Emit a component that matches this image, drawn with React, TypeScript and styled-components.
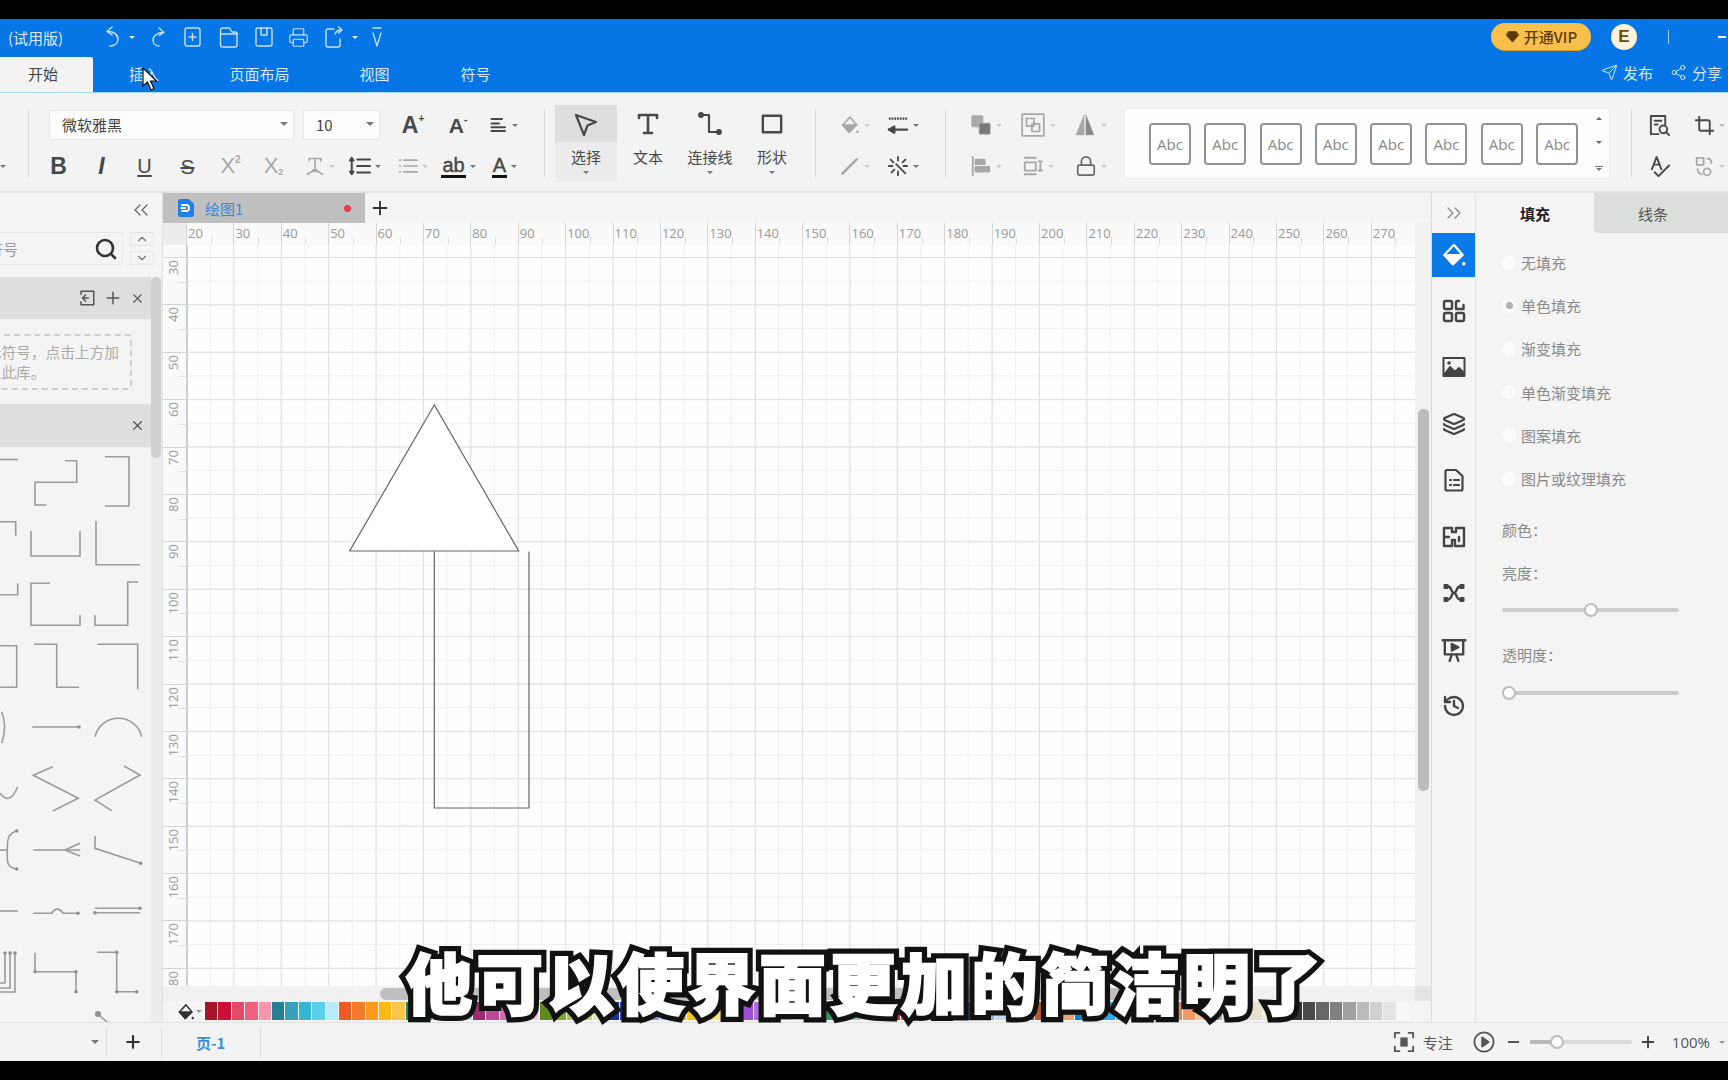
import React from 'react';
import styled, { createGlobalStyle } from 'styled-components';
import {
  Printer, Search, X, Plus, ChevronUp, ChevronDown, Lock, Crop, History, Layers,
  ChevronsLeft, ChevronsRight, Send, Share2,
} from 'lucide-react';

const UI = `"Noto Sans CJK SC", "Noto Sans", sans-serif`;
const LATIN = `"Liberation Sans", "Noto Sans CJK SC", sans-serif`;

const Global = createGlobalStyle`
  html, body { margin: 0; padding: 0; background: #000; }
  body { font-family: ${UI}; font-size: 15px; color: #444; }
  * { box-sizing: border-box; }
`;

const Page = styled.div`
  position: relative;
  width: 1728px;
  height: 1080px;
  overflow: hidden;
  display: flex;
  flex-direction: column;
  background: #000;
`;
const BlackBar = styled.div`flex: 0 0 19px; background: #000;`;

/* title bar */
const TitleBar = styled.div`
  flex: 0 0 38px;
  background: #0676e6;
  display: flex;
  align-items: center;
  color: #e6f0fb;
  padding: 0 0 2px 8px;
`;
const AppName = styled.span`width: 96px; font-size: 15px; color: #dbe9fa;`;
const QuickCell = styled.div<{ $w: number }>`
  width: ${p => p.$w}px;
  display: flex;
  align-items: center;
  gap: 9px;
  color: #c9e0f8;
`;
const TitleRight = styled.div`
  margin-left: auto;
  display: flex;
  align-items: center;
  padding-right: 2px;
`;
const VipPill = styled.div`
  width: 100px;
  height: 28px;
  border-radius: 14px;
  background: #fbc04b;
  border-bottom: 1px solid #d39a2a;
  color: #5a3a08;
  font-size: 15px;
  font-weight: 500;
  display: flex;
  align-items: center;
  justify-content: center;
  gap: 4px;
`;
const Avatar = styled.div`
  width: 26px;
  height: 26px;
  margin-left: 20px;
  border-radius: 50%;
  background: #fdf3d8;
  color: #6a4a10;
  font: 700 17px ${LATIN};
  display: flex;
  align-items: center;
  justify-content: center;
`;
const TitleDivider = styled.div`width: 1px; height: 14px; margin: 0 49px 0 31px; background: #a9cdf3;`;
const MinBtn = styled.div`width: 8px; height: 2px; background: #e9f2fc;`;

/* tab bar */
const TabBar = styled.div`
  flex: 0 0 35px;
  background: #0676e6;
  display: flex;
  align-items: stretch;
`;
const Tab = styled.div<{ $w: number; $active?: boolean }>`
  width: ${p => p.$w}px;
  display: flex;
  align-items: center;
  justify-content: center;
  padding: 0 ${p => (p.$active ? 7 : 0)}px 2px 0;
  font-size: 15px;
  color: ${p => (p.$active ? '#444' : '#d7e8fb')};
  background: ${p => (p.$active ? '#f3f3f3' : 'transparent')};
  border-top-right-radius: ${p => (p.$active ? 2 : 0)}px;
`;
const TabRight = styled.div`
  margin-left: auto;
  display: flex;
  align-items: center;
  gap: 5px;
  padding: 0 6px 4px 0;
  color: #d7e8fb;
  font-size: 15px;
`;
const TabAction = styled.span<{ $ml?: number }>`
  display: inline-flex;
  align-items: center;
  gap: 5px;
  margin-left: ${p => p.$ml ?? 0}px;
`;

/* toolbar */
const Toolbar = styled.div`
  flex: 0 0 101px;
  display: flex;
  background: #f3f3f3;
  border-top: 1px solid #a6dcfa;
  border-bottom: 2px solid #e3e3e3;
`;
const Sep = styled.div`
  flex: 0 0 1px;
  height: 68px;
  margin-top: 16px;
  background: #d9d9d9;
`;
const Section = styled.div<{ $w: number; $pl?: number }>`
  flex: 0 0 ${p => p.$w}px;
  padding: 17px 0 0 ${p => p.$pl ?? 0}px;
  display: flex;
  flex-direction: column;
  gap: 11px;
`;
const ToolRow = styled.div`display: flex; align-items: center; height: 30px;`;
const Cell = styled.div<{ $w: number; $center?: boolean; $dim?: boolean }>`
  flex: 0 0 ${p => p.$w}px;
  display: flex;
  align-items: center;
  justify-content: ${p => (p.$center ? 'center' : 'flex-start')};
  gap: 4px;
  color: ${p => (p.$dim ? '#a8a8a8' : '#484848')};
`;
const Select = styled.div<{ $w: number; $ml?: number }>`
  flex: 0 0 ${p => p.$w}px;
  height: 30px;
  margin-left: ${p => p.$ml ?? 0}px;
  padding: 0 5px 2px 12px;
  background: #fdfdfd;
  border: 1px solid #e6e6e6;
  border-radius: 2px;
  display: flex;
  align-items: center;
  justify-content: space-between;
  font-size: 15px;
  color: #444;
`;
const Caret = styled.i<{ $c?: string; $s?: number }>`
  display: inline-block;
  width: 0;
  height: 0;
  border-left: ${p => p.$s ?? 4}px solid transparent;
  border-right: ${p => p.$s ?? 4}px solid transparent;
  border-top: ${p => p.$s ?? 4}px solid ${p => p.$c ?? '#777'};
`;
const Letter = styled.span<{ $w?: number; $i?: boolean; $u?: boolean; $s?: boolean; $size?: number }>`
  position: relative;
  font: ${p => (p.$w ?? 700)} ${p => p.$size ?? 20}px/1 ${LATIN};
  font-style: ${p => (p.$i ? 'italic' : 'normal')};
  text-decoration: ${p => (p.$u ? 'underline' : p.$s ? 'line-through' : 'none')};
  text-underline-offset: 2px;
  text-decoration-thickness: 2px;
`;
const Mini = styled.sup`font: 700 10px/1 ${LATIN}; vertical-align: top;`;
const Low = styled.sub`font: 700 9px/1 ${LATIN}; vertical-align: bottom;`;
const BarLetter = styled.span`
  font: 400 20px/20px ${LATIN};
  -webkit-text-stroke: 0.4px currentColor;
  border-bottom: 3px solid #111;
  padding: 0 1px;
`;

const ToolBtn = styled.div<{ $active?: boolean; $ml?: number }>`
  flex: 0 0 62px;
  margin: 12px 0 0 ${p => p.$ml ?? 0}px;
  height: 77px;
  display: flex;
  flex-direction: column;
  align-items: center;
  background: ${p => (p.$active ? '#ececec' : 'transparent')};
  color: #484848;
`;
const ToolIcon = styled.div<{ $active?: boolean }>`
  align-self: stretch;
  flex: 0 0 37px;
  display: flex;
  align-items: center;
  justify-content: center;
  background: ${p => (p.$active ? '#dedede' : 'transparent')};
`;
const ToolLabel = styled.div`
  margin-top: 5px;
  font-size: 15px;
  line-height: 20px;
  white-space: nowrap;
  color: #484848;
  height: 24px;
`;
const BtnGroup = styled.div`flex: 0 0 270px; display: flex;`;

const Gallery = styled.div`
  flex: 0 0 486px;
  height: 71px;
  margin-top: 15px;
  padding-left: 24px;
  background: #fdfdfd;
  border: 1px solid #ebebeb;
  display: flex;
  align-items: center;
  gap: 13.3px;
`;
const StyleBox = styled.div`
  flex: 0 0 42px;
  height: 42px;
  border: 2px solid #939393;
  border-radius: 4px;
  background: #fff;
  color: #888;
  font: 400 15px "Open Sans", sans-serif;
  display: flex;
  align-items: center;
  justify-content: center;
`;
const GalleryArrows = styled.div`
  flex: 0 0 16px;
  height: 54px;
  display: flex;
  flex-direction: column;
  justify-content: space-between;
  align-items: center;
  color: #777;
`;
const UpCaret = styled(Caret)`transform: rotate(180deg);`;
const MoreCaret = styled.div`
  display: flex;
  flex-direction: column;
  align-items: center;
  gap: 1px;
  &::before { content: ''; width: 8px; height: 1px; background: #777; }
`;

/* main area */
const Main = styled.div`flex: 1 1 0; min-height: 0; display: flex; background: #f4f4f4;`;

const LeftPanel = styled.aside`
  flex: 0 0 163px;
  display: flex;
  flex-direction: column;
  overflow: hidden;
  border-right: 1px solid #e0e0e0;
  background: #f4f4f4;
`;
const PanelTop = styled.div`
  flex: 0 0 39px;
  display: flex;
  align-items: center;
  justify-content: flex-end;
  padding: 0 9px 6px 0;
  color: #666;
`;
const SearchRow = styled.div`flex: 0 0 33px; display: flex; margin-bottom: 12px;`;
const SearchBox = styled.div`
  flex: 0 0 183px;
  margin-left: -60px;
  padding: 0 4px 0 17px;
  border: 1px solid #e4e4e4;
  border-radius: 2px;
  color: #999;
  font-size: 15px;
  display: flex;
  align-items: center;
  justify-content: space-between;
  white-space: nowrap;
`;
const StepCol = styled.div`
  margin-left: 7px;
  flex: 0 0 24px;
  display: flex;
  flex-direction: column;
  justify-content: space-between;
`;
const StepBtn = styled.div`
  height: 14px;
  border: 1px solid #e4e4e4;
  color: #777;
  display: flex;
  align-items: center;
  justify-content: center;
`;
const LibWrap = styled.div`flex: 1 1 0; min-height: 0; display: flex;`;
const LibMain = styled.div`flex: 0 0 151px; overflow: hidden; display: flex; flex-direction: column;`;
const LibHead = styled.div<{ $h: number }>`
  flex: 0 0 ${p => p.$h}px;
  background: #dedede;
  display: flex;
  align-items: center;
  justify-content: flex-end;
  padding-right: 6px;
  color: #555;
  gap: 7px;
`;
const DashBox = styled.div`
  flex: 0 0 56px;
  margin: 15px 19px 14px -40px;
  padding: 6px 0 0 10px;
  border: 2px dashed #cfcfcf;
  border-radius: 4px;
  color: #aaa;
  font-size: 14.7px;
  line-height: 20px;
  white-space: nowrap;
`;
const LibArt = styled.svg`flex: 0 0 575px; width: 151px; display: block;`;
const PanelScroll = styled.div`flex: 0 0 12px; background: #ececec; padding-left: 0;`;
const PanelThumb = styled.div`width: 10px; height: 181px; border-radius: 5px; background: #cfcfcf;`;

const Center = styled.div`flex: 0 0 1268px; min-width: 0; display: flex; flex-direction: column;`;
const DocTabs = styled.div`flex: 0 0 30px; display: flex; align-items: stretch; background: #f4f4f4;`;
const DocTab = styled.div`
  flex: 0 0 202px;
  background: #c0c0c0;
  display: flex;
  align-items: center;
  padding: 0 14px 0 15px;
  gap: 11px;
  color: #3f86d6;
  font-size: 15px;
`;
const UnsavedDot = styled.i`
  margin-left: auto;
  width: 7px;
  height: 7px;
  border-radius: 50%;
  background: #ee3b48;
`;
const NewDoc = styled.div`
  margin-left: 4px;
  display: flex;
  align-items: center;
  color: #333;
`;
const Workspace = styled.div`
  flex: 1 1 0;
  min-height: 0;
  display: grid;
  grid-template-columns: 23px 1fr 16px;
  grid-template-rows: 22px 1fr;
`;
const RulerCorner = styled.div`background: #ededed;`;
const HRuler = styled.div`display: flex; overflow: hidden; background: #fafafa;`;
const HCell = styled.div`
  position: relative;
  flex: 0 0 47.4px;
  border-left: 1px solid #d4d4d4;
  padding-left: 1px;
  font: 400 13px/20px "Open Sans", sans-serif;
  color: #999;
  &::after {
    content: '';
    position: absolute;
    left: 23.7px;
    bottom: 0;
    width: 1px;
    height: 8px;
    background: #dfdfdf;
  }
`;
const ScrollCol = styled.div`grid-row: 1 / span 2; grid-column: 3; background: #f1f1f1; padding: 186px 0 0 3px;`;
const ScrollThumbV = styled.div`width: 11px; height: 382px; border-radius: 5px; background: #bcbcbc;`;
const VRuler = styled.div`
  display: flex;
  flex-direction: column;
  overflow: hidden;
  background: #fafafa;
  padding-top: 12px;
`;
const VCell = styled.div`
  position: relative;
  flex: 0 0 47.4px;
  border-top: 1px solid #d4d4d4;
  padding: 2px 0 0 1px;
  font: 400 13px/18px "Open Sans", sans-serif;
  color: #999;
  &::after {
    content: '';
    position: absolute;
    top: 23.7px;
    right: 0;
    width: 8px;
    height: 1px;
    background: #dfdfdf;
  }
`;
const VLabel = styled.span`display: block; writing-mode: vertical-rl; transform: rotate(180deg);`;
const Canvas = styled.div`
  position: relative;
  overflow: hidden;
  background-color: #fefefd;
  border-left: 2px solid #cfcfcf;
  background-image:
    linear-gradient(to right, #e0e0de 1px, transparent 1px),
    linear-gradient(to bottom, #e0e0de 1px, transparent 1px),
    linear-gradient(to right, #f0f0ee 1px, transparent 1px),
    linear-gradient(to bottom, #f0f0ee 1px, transparent 1px);
  background-size: 47.4px 47.4px, 47.4px 47.4px, 23.7px 23.7px, 23.7px 23.7px;
  background-position: -2px 0, 0 12px, -2px 0, 0 12px;
`;
const ShapeLayer = styled.svg`position: absolute; left: 0; top: 0; width: 100%; height: 100%;`;
const HScrollRow = styled.div`flex: 0 0 15px; display: flex; background: #f1f1f1;`;
const ScrollThumbH = styled.div`
  margin: 2px 0 0 217px;
  width: 805px;
  height: 12px;
  border-radius: 6px;
  background: #bfbfbf;
`;
const ScrollCorner = styled.div`margin-left: auto; width: 16px; background: #e4e4e4;`;
const PaletteRow = styled.div`flex: 0 0 21px; display: flex; align-items: stretch; padding-left: 14px; background: #f4f4f4;`;
const PaletteTool = styled.div`flex: 0 0 28px; display: flex; align-items: center; gap: 1px; color: #333;`;
const Swatches = styled.div`display: flex; gap: 1px; height: 18px; margin-top: 1px;`;
const Swatch = styled.i<{ $c: string }>`flex: 0 0 12.4px; width: 12.4px; background: ${p => p.$c};`;

const IconBar = styled.div`
  flex: 0 0 45px;
  display: flex;
  flex-direction: column;
  border-left: 1px solid #dcdcdc;
  border-right: 1px solid #e2e2e2;
  background: #f4f4f4;
`;
const BarTop = styled.div`flex: 0 0 40px; display: flex; align-items: center; justify-content: center; color: #888;`;
const BarActive = styled.div`
  flex: 0 0 44px;
  margin-bottom: 5.7px;
  background: #0a7ae9;
  color: #fff;
  display: flex;
  align-items: center;
  justify-content: center;
`;
const BarItem = styled.div`
  flex: 0 0 56.5px;
  display: flex;
  align-items: center;
  justify-content: center;
  color: #444;
`;

const RightPane = styled.div`flex: 0 0 252px; display: flex; flex-direction: column; background: #f4f4f4;`;
const PaneTabs = styled.div`flex: 0 0 40px; display: flex;`;
const PaneTab = styled.div<{ $active?: boolean }>`
  width: ${p => (p.$active ? 118 : 134)}px;
  display: flex;
  align-items: center;
  justify-content: center;
  padding-right: ${p => (p.$active ? 0 : 16)}px;
  font-size: 15px;
  font-weight: ${p => (p.$active ? 700 : 400)};
  color: ${p => (p.$active ? '#222' : '#555')};
  background: ${p => (p.$active ? 'transparent' : '#dcdedc')};
  border-bottom-left-radius: ${p => (p.$active ? 0 : 4)}px;
`;
const PaneBody = styled.div`padding: 8px 0 0 26px; display: flex; flex-direction: column;`;
const RadioRow = styled.div`height: 43.2px; display: flex; align-items: center; gap: 5px; color: #8a8a8a; font-size: 15px;`;
const Radio = styled.i<{ $on?: boolean }>`
  width: 14px;
  height: 14px;
  border-radius: 50%;
  background: #fbfbfb;
  display: flex;
  align-items: center;
  justify-content: center;
  &::after {
    content: '';
    width: 7px;
    height: 7px;
    border-radius: 50%;
    background: ${p => (p.$on ? '#b0b0b0' : 'transparent')};
  }
`;
const FieldLabel = styled.div<{ $mt: number }>`
  margin-top: ${p => p.$mt}px;
  line-height: 20px;
  color: #888;
  font-size: 15px;
`;
const SliderTrack = styled.div<{ $mt: number; $w: number }>`
  position: relative;
  margin-top: ${p => p.$mt}px;
  width: ${p => p.$w}px;
  height: 4px;
  border-radius: 2px;
  background: #cdcdcd;
`;
const SliderThumb = styled.i<{ $at: number }>`
  position: absolute;
  left: ${p => p.$at}px;
  top: -5px;
  width: 14px;
  height: 14px;
  border-radius: 50%;
  background: #fff;
  border: 2px solid #bcbcbc;
`;

/* status bar */
const StatusBar = styled.div`
  flex: 0 0 39px;
  display: flex;
  align-items: center;
  background: #f3f3f3;
  border-top: 1px solid #e0e0e0;
  color: #555;
`;
const StatusSep = styled.div<{ $ml: number }>`
  width: 1px;
  height: 30px;
  margin-left: ${p => p.$ml}px;
  background: #dcdcdc;
`;
const StatusCaret = styled.div`margin-left: 91px; display: flex;`;
const AddPage = styled.div`margin-left: 16px; display: flex; color: #333;`;
const PageName = styled.div`margin-left: 34px; color: #3a8fdc; font-size: 15px; font-weight: 700;`;
const StatusRight = styled.div`margin-left: auto; display: flex; align-items: center; padding-right: 3px;`;
const FocusBtn = styled.div`display: flex; align-items: center; gap: 8px; font-size: 15px; color: #555;`;
const PlayBtn = styled.div`margin-left: 20px; display: flex; color: #555;`;
const ZoomDash = styled.i`margin-left: 13px; width: 11px; height: 2px; background: #555;`;
const ZoomTrack = styled.div`
  position: relative;
  margin-left: 11px;
  width: 102px;
  height: 4px;
  border-radius: 2px;
  background: #dadada;
  &::before {
    content: '';
    position: absolute;
    left: 0;
    top: 0;
    width: 27px;
    height: 4px;
    background: #b8b8b8;
  }
`;
const ZoomPlus = styled.div`margin-left: 7px; display: flex; color: #444;`;
const ZoomValue = styled.div`margin-left: 15px; font: 400 15px "Open Sans", sans-serif; color: #555; display: flex; align-items: center; gap: 9px;`;

const Caption = styled.div`
  position: absolute;
  left: 406px;
  top: 930px;
  width: 930px;
  font: 900 66px/100px "Noto Sans CJK SC", sans-serif;
  letter-spacing: 4.7px;
  white-space: nowrap;
  color: #fff;
  -webkit-text-stroke: 13px #111;
  paint-order: stroke fill;
  &::after {
    content: attr(data-text);
    position: absolute;
    left: 0;
    top: 0;
    color: #fff;
    -webkit-text-stroke: 2.5px #fff;
  }
`;
const Cursor = styled.svg`position: absolute; left: 142px; top: 67px;`;

const Svg: React.FC<{ w?: number; h?: number; vb?: string; sw?: number; fill?: string; children: React.ReactNode }> = ({
  w = 22, h, vb = '0 0 24 24', sw = 2, fill = 'none', children,
}) => (
  <svg width={w} height={h ?? w} viewBox={vb} fill={fill} stroke="currentColor" strokeWidth={sw} strokeLinecap="round" strokeLinejoin="round">
    {children}
  </svg>
);

const FillBucket: React.FC<{ w?: number }> = ({ w = 22 }) => (
  <Svg w={w}>
    <path d="M12 2.5 L3 12 L11 20.5 L20 12 Z" />
    <path d="M3.5 12 H19.5 L11 20.5 Z" fill="currentColor" />
    <circle cx="21" cy="20" r="1.6" fill="currentColor" stroke="none" />
  </Svg>
);

const PALETTE = [
  '#a61429', '#cc0f35', '#e24a66', '#f0607f', '#f598ac',
  '#247f93', '#3a9fb8', '#35b6d3', '#5ad0e8', '#b8ebf5',
  '#ee5a24', '#f57a2c', '#f99a1c', '#fdb913', '#fcc450',
  '#1e8a6e', '#2ea384', '#42b89a', '#6fd0b5', '#a8e6d4',
  '#9c2a6e', '#bd4a95', '#d06db0', '#e59dcc', '#f4cde6',
  '#5f8a1d', '#7ba636', '#a6c24f', '#c3d66f', '#dfe9a8',
  '#1a2fa0', '#2a44c0', '#5066d8', '#8a9ae8', '#c0c9f2',
  '#e8a818', '#f5c518', '#f7dc3c', '#f9e877', '#fcf3b5',
  '#9c4fd6', '#b070e0', '#c490e8', '#d8b5f0', '#ecdaf8',
  '#2f8f4f', '#3a9a5a', '#5fb87a', '#8ed0a2', '#c4e8cf',
  '#a82a18', '#c73b26', '#f05032', '#f47c63', '#f9b3a3',
  '#1f4fb8', '#2456c4', '#4f7ad8', '#8fb0e8', '#c5d7f5',
  '#7a3418', '#a04a28', '#b85c30', '#d07840', '#e8a070',
  '#0f7fd0', '#1a92e0', '#2ea6f0', '#74c4f5', '#b5e0fa',
  '#8f5034', '#b87050', '#d9895e', '#f09a66', '#f7c5a2',
  '#b5ad95', '#cdc5ae', '#dcd5c0', '#e8e0cc', '#f2edd8',
  '#222222', '#333333', '#4a4a4a', '#666666', '#808080',
  '#a0a0a0', '#bbbbbb', '#d0d0d0', '#e4e4e4', '#f8f8f8',
];

const COL_LABELS = Array.from({ length: 27 }, (_, i) => 20 + i * 10);
const ROW_LABELS = Array.from({ length: 16 }, (_, i) => 30 + i * 10);

const y = (v: number) => v - 447;
const pts = (list: number[][]) => list.map(([a, b]) => `${a},${y(b)}`).join(' ');

const LINES: number[][][] = [
  [[0, 459.5], [18, 459.5]],
  [[65, 460.7], [76.7, 460.7], [76.7, 482.3], [35, 482.3], [35, 505], [46.7, 505]],
  [[105, 456.7], [129, 456.7], [129, 506], [105, 506]],
  [[0, 521.7], [15.7, 521.7], [15.7, 535.7]],
  [[31, 531], [31, 556], [80, 556], [80, 531]],
  [[96, 521], [96, 564.7], [140, 564.7]],
  [[0, 594.7], [17.7, 594.7], [17.7, 583.3]],
  [[50, 583.3], [31, 583.3], [31, 625.3], [80, 625.3], [80, 615]],
  [[138, 582], [127.7, 582], [127.7, 625.3], [95, 625.3], [95, 615]],
  [[0, 645.7], [16.7, 645.7], [16.7, 687.3], [0, 687.3]],
  [[34, 644.3], [56.7, 644.3], [56.7, 687.3], [79, 687.3]],
  [[97.3, 644.3], [137.7, 644.3], [137.7, 689.3]],
  [[32.3, 727], [79, 727]],
  [[52.7, 766.7], [33.3, 775.3], [78.3, 798.3], [52.7, 811]],
  [[124, 766], [140, 775], [95, 800], [111.7, 810.7]],
  [[0, 850], [7.3, 850]],
  [[33.3, 850], [80, 850]],
  [[65, 850], [80, 843.3]],
  [[65, 850], [80, 856]],
  [[95, 836], [95, 848.3], [140.7, 863.3]],
  [[0, 911], [17.7, 911]],
  [[95, 908.3], [140, 908.3]],
  [[95, 912.7], [140, 912.7]],
  [[5, 953], [5, 983], [0, 983]],
  [[10, 953], [10, 988], [0, 988]],
  [[15, 953], [15, 992], [0, 992]],
  [[35, 952.7], [35, 971.7], [76, 971.7], [76, 991.7]],
  [[97.3, 952.3], [116.7, 952.3], [116.7, 991.7], [136.7, 991.7]],
  [[98, 1014], [107, 1022]],
];
const DOTS: number[][] = [
  [79, 727], [16.7, 831], [16.7, 869], [78, 913.3], [140, 908.3], [95, 912.7],
  [35, 971.7], [76, 971.7], [76, 991.7], [116.7, 952.3], [116.7, 991.7], [136.7, 991.7],
  [5, 953], [10, 953], [15, 953], [98, 1014], [140.7, 863.3],
];

const CAPTION = '他可以使界面更加的简洁明了';

const App: React.FC = () => (
  <Page>
    <Global />
    <BlackBar />
    <TitleBar>
      <AppName>(试用版)</AppName>
      <QuickCell $w={47}>
        <Svg w={16} h={24} vb="0 0 16 24" sw={1.5}><path d="M8 2 L3 6.5 L8 10 M3 6.5 C10 6 14 10 14 14 C14 18 11 21 6 21" /></Svg>
        <Caret $c="#e6f0fb" $s={3} />
      </QuickCell>
      <QuickCell $w={33}>
        <Svg w={16} h={24} vb="0 0 16 24" sw={1.4}><path d="M8 3 L13 7.5 L8 10.5 M13 7.5 C6 7.5 2 11 2 15 C2 18 4 21 8 21" /></Svg>
      </QuickCell>
      <QuickCell $w={35}>
        <Svg w={17} h={22} vb="0 0 17 22" sw={1.4}><rect x="1" y="2" width="15" height="18" rx="2" /><path d="M8.5 7.5V14.5 M5 11H12" /></Svg>
      </QuickCell>
      <QuickCell $w={36}>
        <Svg w={20} h={22} vb="0 0 20 22" sw={1.4}><path d="M1.5 8V4a2 2 0 0 1 2-2h7l2.5 4h3a2 2 0 0 1 2 2v11a2 2 0 0 1-2 2h-12.500a2 2 0 0 1-2-2Z M1.500 8h17" /></Svg>
      </QuickCell>
      <QuickCell $w={33}>
        <Svg w={18} h={22} vb="0 0 18 22" sw={1.4}><rect x="1" y="2" width="16" height="18" rx="2" /><path d="M6 2V9H12V2" /></Svg>
      </QuickCell>
      <QuickCell $w={37}><Printer size={21} strokeWidth={1.4} /></QuickCell>
      <QuickCell $w={47}>
        <Svg w={18} h={24} vb="0 0 18 24" sw={1.4}><path d="M9 4H3a2 2 0 0 0-2 2v14a2 2 0 0 0 2 2h10a2 2 0 0 0 2-2v-6 M10 9 C11 6 13 5 17 5 M13.500 2 L17 5 L13.500 8" /></Svg>
        <Caret $c="#e6f0fb" $s={3} />
      </QuickCell>
      <QuickCell $w={20}>
        <Svg w={10} h={24} vb="0 0 10 24" sw={1.3}><path d="M1 3H9 M1 8L5 21L9 8" /></Svg>
      </QuickCell>
      <TitleRight>
        <VipPill>
          <Svg w={15} vb="0 0 24 24" fill="#5a3a08" sw={1}><path d="M6 4H18L22 10L12 21L2 10Z" /></Svg>
          开通VIP
        </VipPill>
        <Avatar>E</Avatar>
        <TitleDivider />
        <MinBtn />
      </TitleRight>
    </TitleBar>

    <TabBar>
      <Tab $w={93} $active>开始</Tab>
      <Tab $w={102}>插入</Tab>
      <Tab $w={129}>页面布局</Tab>
      <Tab $w={101}>视图</Tab>
      <Tab $w={101}>符号</Tab>
      <TabRight>
        <TabAction><Send size={17} strokeWidth={1.4} />发布</TabAction>
        <TabAction $ml={12}><Share2 size={17} strokeWidth={1.4} />分享</TabAction>
      </TabRight>
    </TabBar>

    <Toolbar>
      <Section $w={28}>
        <ToolRow />
        <ToolRow><Caret $s={3} /></ToolRow>
      </Section>
      <Sep />
      <Section $w={515} $pl={8}>
        <ToolRow>
          <Select $w={245} $ml={12}>微软雅黑<Caret /></Select>
          <Select $w={77} $ml={9}>10<Caret /></Select>
          <Cell $w={66} $center><Letter $w={700} $size={23}>A<Mini>+</Mini></Letter></Cell>
          <Cell $w={24} $center><Letter $w={700} $size={21}>A<Mini>-</Mini></Letter></Cell>
          <Cell $w={67} $center>
            <Svg w={18} sw={2.6}><path d="M2 4H16 M2 10H12 M2 15H20 M2 20H20" /></Svg>
            <Caret $s={3} />
          </Cell>
        </ToolRow>
        <ToolRow>
          <Cell $w={43} $center><Letter $size={23}>B</Letter></Cell>
          <Cell $w={43} $center><Letter $size={23} $i>I</Letter></Cell>
          <Cell $w={43} $center><Letter $size={20} $w={400} $u>U</Letter></Cell>
          <Cell $w={43} $center><Letter $size={21} $w={400} $s>S</Letter></Cell>
          <Cell $w={43} $center $dim><Letter $size={22} $w={400}>X<Mini>2</Mini></Letter></Cell>
          <Cell $w={43} $center $dim><Letter $size={22} $w={400}>X<Low>2</Low></Letter></Cell>
          <Cell $w={50} $center $dim>
            <Svg w={20} sw={2}><path d="M5 6V3H19V6 M12 3V17 M9 17H15 M3 22C8 17 16 17 21 22" /></Svg>
            <Caret $s={3} $c="#ccc" />
          </Cell>
          <Cell $w={40} $center>
            <Svg w={22} sw={2.2}><path d="M9 5H23 M9 12H23 M9 19H23 M3 3V21 M1 6L3 3L5 6 M1 18L3 21L5 18" /></Svg>
            <Caret $s={3} />
          </Cell>
          <Cell $w={56} $center $dim>
            <Svg w={20} sw={2}><path d="M7 5H23 M7 12H23 M7 19H23 M2 5H3 M2 12H3 M2 19H3" /></Svg>
            <Caret $s={3} $c="#ccc" />
          </Cell>
          <Cell $w={35} $center>
            <BarLetter>ab</BarLetter>
            <Caret $s={3} />
          </Cell>
          <Cell $w={57} $center>
            <BarLetter>A</BarLetter>
            <Caret $s={3} />
          </Cell>
        </ToolRow>
      </Section>
      <Sep />
      <BtnGroup>
        <ToolBtn $active $ml={10}>
          <ToolIcon $active><Svg w={24} sw={2.2}><path d="M2 3 L22 10 L13.500 13.500 L10 23 Z" /></Svg></ToolIcon>
          <ToolLabel>选择</ToolLabel>
          <Caret $s={3} />
        </ToolBtn>
        <ToolBtn>
          <ToolIcon><Svg w={24} sw={2.6}><path d="M3 6V3H21V6 M12 3V21 M8 21H16" /></Svg></ToolIcon>
          <ToolLabel>文本</ToolLabel>
        </ToolBtn>
        <ToolBtn>
          <ToolIcon>
            <Svg w={24} sw={2.2}>
              <path d="M4 3H11V20H21" />
              <circle cx="3" cy="3" r="1.800" fill="currentColor" />
              <circle cx="21" cy="20" r="1.800" fill="currentColor" />
            </Svg>
          </ToolIcon>
          <ToolLabel>连接线</ToolLabel>
          <Caret $s={3} />
        </ToolBtn>
        <ToolBtn>
          <ToolIcon><Svg w={22} sw={2.6}><rect x="2" y="3" width="20" height="18" /></Svg></ToolIcon>
          <ToolLabel>形状</ToolLabel>
          <Caret $s={3} />
        </ToolBtn>
      </BtnGroup>
      <Sep />
      <Section $w={129} $pl={24}>
        <ToolRow>
          <Cell $w={47} $dim><FillBucket w={20} /><Caret $s={3} $c="#ccc" /></Cell>
          <Cell $w={50}>
            <Svg w={22} sw={2.4}>
              <path d="M2 5H22" strokeDasharray="2 1" strokeLinecap="butt" />
              <path d="M2 17H22" />
              <path d="M2 17L8 13.500V20.500Z" fill="currentColor" />
            </Svg>
            <Caret $s={3} />
          </Cell>
        </ToolRow>
        <ToolRow>
          <Cell $w={47} $dim>
            <Svg w={20} sw={3}><path d="M3 21 L20 4" /></Svg>
            <Caret $s={3} $c="#ccc" />
          </Cell>
          <Cell $w={50}>
            <Svg w={22} sw={2}><path d="M12 2V6 M4 5L7 8 M20 5L17 8 M2 12H6 M18 12H22 M5 19L8 16 M12 18V22 M10 10L20 20" /></Svg>
            <Caret $s={3} />
          </Cell>
        </ToolRow>
      </Section>
      <Sep />
      <Section $w={178} $pl={24}>
        <ToolRow>
          <Cell $w={50} $dim>
            <Svg w={22} sw={1} fill="currentColor"><rect x="2" y="2" width="12" height="12" rx="1" /><rect x="10" y="10" width="12" height="12" rx="1" fill="#777" /></Svg>
            <Caret $s={3} $c="#ccc" />
          </Cell>
          <Cell $w={53} $dim>
            <Svg w={26} sw={1.6}>
              <rect x="2" y="2" width="20" height="20" />
              <rect x="6" y="6" width="7" height="7" />
              <rect x="11" y="11" width="7" height="7" />
            </Svg>
            <Caret $s={3} $c="#ccc" />
          </Cell>
          <Cell $w={40} $dim>
            <Svg w={24} sw={0.5} fill="currentColor"><path d="M11 2 L3 22H11Z" /><path d="M13 2 L21 22H13Z" fill="#888" /></Svg>
            <Caret $s={3} $c="#ccc" />
          </Cell>
        </ToolRow>
        <ToolRow>
          <Cell $w={52} $dim>
            <Svg w={22} sw={2}>
              <path d="M3 2V22" />
              <rect x="6" y="5" width="10" height="5" fill="currentColor" />
              <rect x="6" y="13" width="15" height="5" fill="currentColor" />
            </Svg>
            <Caret $s={3} $c="#ccc" />
          </Cell>
          <Cell $w={53} $dim>
            <Svg w={22} sw={2}>
              <path d="M3 3H15 M3 21H15 M20 7V17 M18 7H22 M18 17H22" />
              <rect x="3" y="8" width="12" height="9" />
            </Svg>
            <Caret $s={3} $c="#ccc" />
          </Cell>
          <Cell $w={40}>
            <Lock size={22} strokeWidth={1.8} color="#666" />
            <Caret $s={3} $c="#ccc" />
          </Cell>
        </ToolRow>
      </Section>
      <Gallery>
        {Array.from({ length: 8 }, (_, i) => <StyleBox key={i}>Abc</StyleBox>)}
        <GalleryArrows>
          <UpCaret $s={3} $c="#666" />
          <Caret $s={3} $c="#666" />
          <MoreCaret><Caret $s={3} $c="#777" /></MoreCaret>
        </GalleryArrows>
      </Gallery>
      <Section $w={21} />
      <Sep />
      <Section $w={96} $pl={16}>
        <ToolRow>
          <Cell $w={46}>
            <Svg w={23} sw={2}>
              <path d="M18 11V2H3V21H11 M7 7H14 M7 11H10" />
              <circle cx="16" cy="16" r="4" />
              <path d="M19 19L22 22" />
            </Svg>
          </Cell>
          <Cell $w={34}><Crop size={21} strokeWidth={2.2} /><Caret $s={3} $c="#bbb" /></Cell>
        </ToolRow>
        <ToolRow>
          <Cell $w={46}>
            <Svg w={23} sw={2}><path d="M4 15L9 2L14 15 M6 10H12 M7 18L11 22L22 11" /></Svg>
          </Cell>
          <Cell $w={34} $dim>
            <Svg w={21} sw={2}><rect x="3" y="2" width="8" height="8" /><circle cx="15" cy="18" r="4" /><path d="M15 3C18 3 20 5 20 8 M4 15C4 18 6 20 9 21" /></Svg>
            <Caret $s={3} $c="#ccc" />
          </Cell>
        </ToolRow>
      </Section>
    </Toolbar>

    <Main>
      <LeftPanel>
        <PanelTop><ChevronsLeft size={24} strokeWidth={1.3} /></PanelTop>
        <SearchRow>
          <SearchBox>搜索符号<Search size={24} strokeWidth={2.6} color="#333" /></SearchBox>
          <StepCol>
            <StepBtn><ChevronUp size={14} /></StepBtn>
            <StepBtn><ChevronDown size={14} /></StepBtn>
          </StepCol>
        </SearchRow>
        <LibWrap>
          <LibMain>
            <LibHead $h={42}>
              <Svg w={18} sw={2}><path d="M4 7V3H21V21H4V17 M14 12H6 M10 8L6 12L10 16" /></Svg>
              <Plus size={20} strokeWidth={1.8} />
              <X size={15} strokeWidth={1.8} />
            </LibHead>
            <DashBox>暂无符号，点击上方加<br />载入此库。</DashBox>
            <LibHead $h={43}><X size={15} strokeWidth={2} /></LibHead>
            <LibArt viewBox="0 0 151 575" height={575}>
              <g fill="none" stroke="#9b9b9b" strokeWidth={1.6}>
                {LINES.map((l, i) => <polyline key={i} points={pts(l)} />)}
                <path d={`M1.7 ${y(711.7)} Q7.500 ${y(727)} 1.700 ${y(743.300)}`} />
                <path d={`M95 ${y(736.7)} A 24 24 0 0 1 141.700 ${y(736.7)}`} />
                <path d={`M0 ${y(793.3)} Q10 ${y(806)} 17.700 ${y(786.7)}`} />
                <path d={`M16.700 ${y(831)} Q7.300 ${y(833)} 7.300 ${y(845)} V${y(860)} Q8 ${y(868)} 16.700 ${y(869)}`} />
                <path d={`M33.300 ${y(913.3)} H51.700 Q57 ${y(905)} 63.300 ${y(913.3)} H78.300`} />
              </g>
              <g fill="#8f8f8f">
                {DOTS.map(([a, b], i) => <circle key={i} cx={a} cy={y(b)} r={i === 15 ? 3 : 1.8} />)}
              </g>
            </LibArt>
          </LibMain>
          <PanelScroll><PanelThumb /></PanelScroll>
        </LibWrap>
      </LeftPanel>

      <Center>
        <DocTabs>
          <DocTab>
            <Svg w={16} h={18} vb="0 0 16 18" sw={0} fill="#1f7fe8">
              <path d="M2 0H11L16 5V16a2 2 0 0 1-2 2H2a2 2 0 0 1-2-2V2a2 2 0 0 1 2-2Z" />
              <path d="M4 6H8a3 3 0 0 1 0 6H4 M3 9H7" fill="none" stroke="#fff" strokeWidth={1.8} />
            </Svg>
            绘图1
            <UnsavedDot />
          </DocTab>
          <NewDoc><Plus size={22} strokeWidth={2} /></NewDoc>
        </DocTabs>
        <Workspace>
          <RulerCorner />
          <HRuler>{COL_LABELS.map(n => <HCell key={n}>{n}</HCell>)}</HRuler>
          <ScrollCol><ScrollThumbV /></ScrollCol>
          <VRuler>{ROW_LABELS.map(n => <VCell key={n}><VLabel>{n}</VLabel></VCell>)}</VRuler>
          <Canvas>
            <ShapeLayer>
              <path d="M246.300 160 L161.700 306 L330.700 306 Z" fill="#fff" stroke="#666" strokeWidth={1.2} />
              <path d="M246.300 306.500 V563 H341 V306.500" fill="none" stroke="#666" strokeWidth={1.2} />
            </ShapeLayer>
          </Canvas>
        </Workspace>
        <HScrollRow>
          <ScrollThumbH />
          <ScrollCorner />
        </HScrollRow>
        <PaletteRow>
          <PaletteTool><FillBucket w={18} /><Caret $s={3} $c="#999" /></PaletteTool>
          <Swatches>{PALETTE.map((c, i) => <Swatch key={i} $c={c} />)}</Swatches>
        </PaletteRow>
      </Center>

      <IconBar>
        <BarTop><ChevronsRight size={24} strokeWidth={1.3} /></BarTop>
        <BarActive><FillBucket w={26} /></BarActive>
        <BarItem>
          <Svg w={24} sw={2.4}>
            <rect x="2" y="2" width="8" height="8" rx="1.500" />
            <path d="M14 10V3.500A1.500 1.500 0 0 1 15.500 2H17 M21.500 6V10H15" />
            <rect x="2" y="14" width="8" height="8" rx="1.500" />
            <rect x="14" y="14" width="8" height="8" rx="1.500" />
          </Svg>
        </BarItem>
        <BarItem>
          <Svg w={24} sw={2}>
            <rect x="1.500" y="3" width="21" height="18" />
            <path d="M2 20L8 12L13 17L17 13L22 18V20Z" fill="currentColor" />
            <circle cx="7" cy="8" r="0.800" fill="currentColor" />
          </Svg>
        </BarItem>
        <BarItem><Layers size={24} strokeWidth={2.2} /></BarItem>
        <BarItem>
          <Svg w={24} sw={2.2}><path d="M14 2H5a1.500 1.500 0 0 0-1.500 1.500V21A1.500 1.500 0 0 0 5 22.500H19A1.500 1.500 0 0 0 20.500 21V8Z M8 12H9 M12 12H17 M8 17H9 M12 17H17" /></Svg>
        </BarItem>
        <BarItem>
          <Svg w={24} sw={2.4}><path d="M2 3H10V7H14V3H22V21H13V15H10V21H2Z M2 12H7 M17 12V16" /></Svg>
        </BarItem>
        <BarItem>
          <Svg w={24} sw={2.4} fill="currentColor">
            <rect x="1.500" y="3" width="5" height="5" rx="1" stroke="none" />
            <rect x="17.500" y="3" width="5" height="5" rx="1" stroke="none" />
            <rect x="1.500" y="16" width="5" height="5" rx="1" stroke="none" />
            <rect x="17.500" y="16" width="5" height="5" rx="1" stroke="none" />
            <path d="M6 5.500C10 5.500 9 12 12 12C15 12 14 5.500 18 5.500 M6 18.500C10 18.500 9 12 12 12C15 12 14 18.500 18 18.500" fill="none" />
          </Svg>
        </BarItem>
        <BarItem>
          <Svg w={26} sw={2.2}>
            <path d="M1.500 3H22.500 M3.500 3V16H20.500V3 M8 22L10 16 M16 22L14 16" />
            <path d="M10 6.500L16 9.500L10 12.500Z" fill="currentColor" />
          </Svg>
        </BarItem>
        <BarItem><History size={24} strokeWidth={2.4} /></BarItem>
      </IconBar>

      <RightPane>
        <PaneTabs>
          <PaneTab $active>填充</PaneTab>
          <PaneTab>线条</PaneTab>
        </PaneTabs>
        <PaneBody>
          <RadioRow><Radio />无填充</RadioRow>
          <RadioRow><Radio $on />单色填充</RadioRow>
          <RadioRow><Radio />渐变填充</RadioRow>
          <RadioRow><Radio />单色渐变填充</RadioRow>
          <RadioRow><Radio />图案填充</RadioRow>
          <RadioRow><Radio />图片或纹理填充</RadioRow>
          <FieldLabel $mt={20}>颜色：</FieldLabel>
          <FieldLabel $mt={23}>亮度：</FieldLabel>
          <SliderTrack $mt={25} $w={177}><SliderThumb $at={82} /></SliderTrack>
          <FieldLabel $mt={33}>透明度：</FieldLabel>
          <SliderTrack $mt={26} $w={177}><SliderThumb $at={0} /></SliderTrack>
        </PaneBody>
      </RightPane>
    </Main>

    <StatusBar>
      <StatusCaret><Caret $s={4} $c="#777" /></StatusCaret>
      <StatusSep $ml={7} />
      <AddPage><Plus size={20} strokeWidth={2.6} /></AddPage>
      <StatusSep $ml={18} />
      <PageName>页-1</PageName>
      <StatusSep $ml={35} />
      <StatusRight>
        <FocusBtn>
          <Svg w={22} sw={2}>
            <path d="M2 7V2H7 M17 2H22V7 M2 17V22H7 M17 22H22V17" />
            <rect x="8" y="7" width="8" height="10" fill="currentColor" stroke="none" />
          </Svg>
          专注
        </FocusBtn>
        <PlayBtn>
          <Svg w={22} sw={2}>
            <circle cx="12" cy="12" r="10.500" />
            <path d="M10 7L17 12L10 17Z" fill="currentColor" />
          </Svg>
        </PlayBtn>
        <ZoomDash />
        <ZoomTrack><SliderThumb $at={20} /></ZoomTrack>
        <ZoomPlus><Plus size={18} strokeWidth={2.6} /></ZoomPlus>
        <ZoomValue>100%<Caret $s={3} $c="#999" /></ZoomValue>
      </StatusRight>
    </StatusBar>
    <BlackBar />

    <Cursor width={18} height={24} viewBox="0 0 18 24">
      <path d="M1 1 V19 L5.500 15 L9 23 L12 21.500 L8.500 14 H14.500 Z" fill="#fff" stroke="#111" strokeWidth={1.2} />
    </Cursor>
    <Caption data-text={CAPTION}>{CAPTION}</Caption>
  </Page>
);

export default App;
